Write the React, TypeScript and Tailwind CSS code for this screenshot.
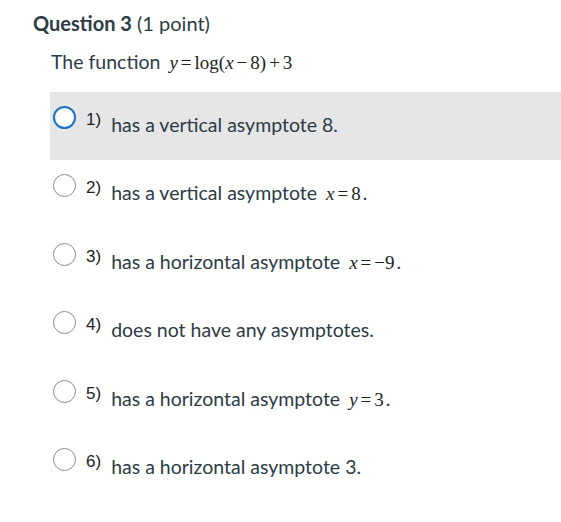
import React from "react";

const Eq = ({ children }: { children: React.ReactNode }) => (
  <span className="ml-[9px] mr-[2px] font-['Liberation_Serif',serif] text-[19px] text-[#222]">{children}</span>
);
const V = ({ children }: { children: React.ReactNode }) => <i>{children}</i>;
const Op = ({ children }: { children: React.ReactNode }) => <span className="mx-[3px]">{children}</span>;

const options: { n: string; body: React.ReactNode }[] = [
  { n: "1)", body: <>has a vertical asymptote 8.</> },
  {
    n: "2)",
    body: (
      <>
        has a vertical asymptote
        <Eq>
          <V>x</V>
          <Op>=</Op>8
        </Eq>
        .
      </>
    ),
  },
  {
    n: "3)",
    body: (
      <>
        has a horizontal asymptote
        <Eq>
          <V>x</V>
          <Op>=</Op>−9
        </Eq>
        .
      </>
    ),
  },
  { n: "4)", body: <>does not have any asymptotes.</> },
  {
    n: "5)",
    body: (
      <>
        has a horizontal asymptote
        <Eq>
          <V>y</V>
          <Op>=</Op>3
        </Eq>
        .
      </>
    ),
  },
  { n: "6)", body: <>has a horizontal asymptote 3.</> },
];

export default function App() {
  return (
    <div className="w-[561px] h-[522px] bg-white font-['Lato',sans-serif] text-[#2d3b45] overflow-hidden">
      <div className="pl-[33px] pt-[10px]">
        <h2 className="text-[20px] leading-[26px]">
          <span className="font-bold">Question 3</span> (1 point)
        </h2>
      </div>
      <div className="pl-[51px] mt-[13px] text-[19.5px] leading-[26px]">
        The function
        <Eq>
          <V>y</V>
          <Op>=</Op>log(<V>x</V>
          <Op>−</Op>8)<Op>+</Op>3
        </Eq>
      </div>
      <div className="mt-[16px] ml-[50px]">
        {options.map((o, i) => (
          <div
            key={o.n}
            className={`flex items-start h-[68.4px] pt-[14px] ${i === 0 ? "bg-[#e6e6e6]" : ""}`}
          >
            <div
              className={`ml-[3px] w-[23px] h-[23px] rounded-full bg-white shrink-0 ${
                i === 0 ? "border-2 border-[#1b72c4]" : "border border-[#8c8c8c]"
              }`}
            />
            <span className="ml-[10px] mt-[5px] font-['Liberation_Sans',sans-serif] text-[17px] leading-[18px] text-[#222]">
              {o.n}
            </span>
            <span className="ml-[10px] mt-[6px] text-[19.5px] leading-[26px]">{o.body}</span>
          </div>
        ))}
      </div>
      <div className="mt-[19px] h-[20px] bg-gradient-to-b from-white to-[#f8f8f8]" />
    </div>
  );
}
